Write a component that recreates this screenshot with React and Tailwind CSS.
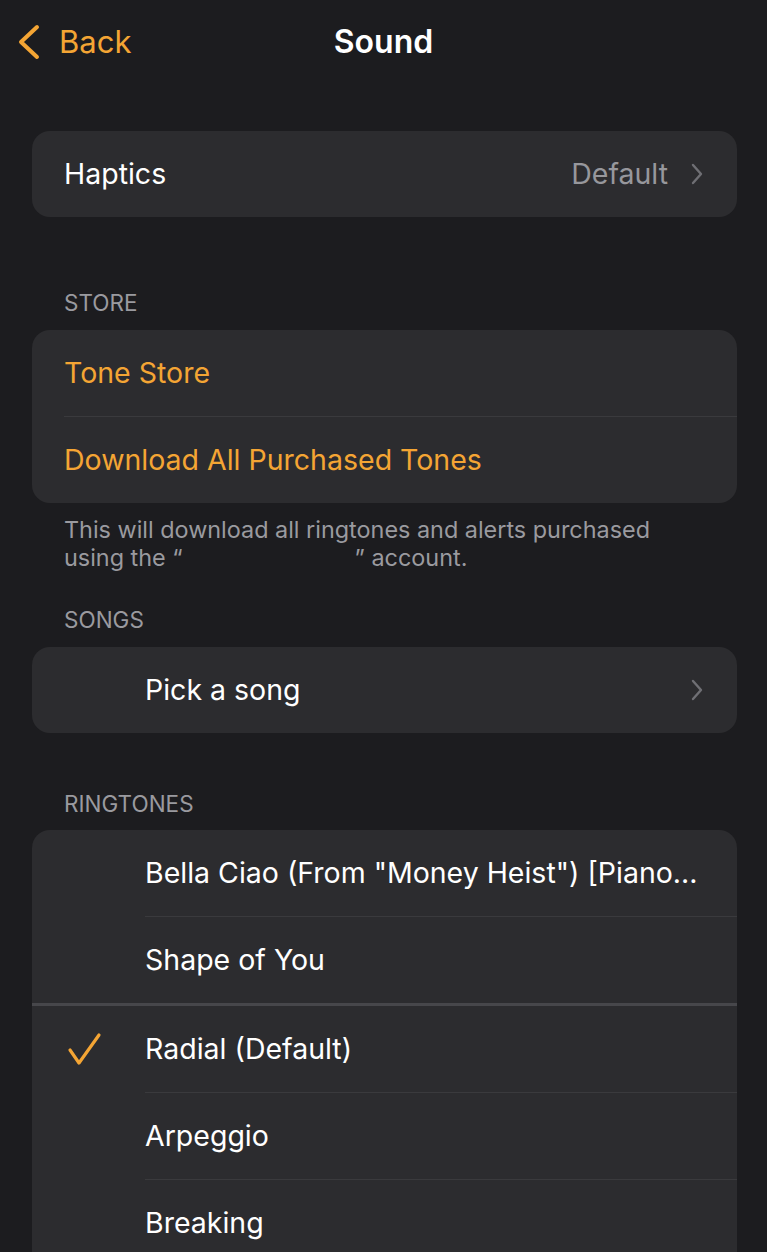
import React from "react";

const font = { fontFamily: 'Inter, "Noto Sans", "Liberation Sans", sans-serif' };

function Chevron() {
  return (
    <svg width="14" height="24" viewBox="0 0 14 24" fill="none" className="shrink-0">
      <path d="M3 3l8 9-8 9" stroke="#6f6f74" strokeWidth="2.4" strokeLinecap="round" strokeLinejoin="round" />
    </svg>
  );
}

function Row({ children, indent = false, right, check, sep, sepFull }) {
  return (
    <div className="relative">
      <div className={`flex items-center h-[86px] pr-[33px] ${indent ? "pl-[113px]" : "pl-[32px]"}`}>
        {check && (
          <svg className="absolute left-[35px] top-[26px]" width="36" height="34" viewBox="0 0 36 34" fill="none">
            <path d="M3 18l9 13L32 3" stroke="#f4a534" strokeWidth="3.2" strokeLinecap="round" strokeLinejoin="round" />
          </svg>
        )}
        <div className="flex-1 min-w-0 whitespace-nowrap overflow-hidden">{children}</div>
        {right}
      </div>
      {sep && <div className={`h-px bg-[#3a3a3d] ${indent ? "ml-[113px]" : "ml-[32px]"}`} />}
      {sepFull && <div className="h-[3px] bg-[#47474b]" />}
    </div>
  );
}

function Label({ children, className = "" }) {
  return (
    <div className={`pl-[64px] text-[22.5px] leading-[28px] text-[#9a9a9f] ${className}`}>{children}</div>
  );
}

export default function App() {
  return (
    <div style={font} className="w-[767px] h-[1252px] overflow-hidden bg-[#1c1c1f] text-white text-[28.5px]">
      <div className="relative flex items-center h-[84px]">
        <div className="flex items-center pl-[16px] gap-[19px] text-[#f4a534] text-[31px]">
          <svg width="26" height="36" viewBox="0 0 26 36" fill="none">
            <path d="M21 3L5 18l16 15" stroke="#f4a534" strokeWidth="4" strokeLinecap="round" strokeLinejoin="round" />
          </svg>
          <span className="-ml-[2px]">Back</span>
        </div>
        <div className="absolute left-0 right-0 text-center font-semibold text-[32px] pointer-events-none">Sound</div>
      </div>

      <div className="pl-[32px] pr-[30px] mt-[47px]">
        <div className="rounded-[18px] bg-[#2c2c2f]">
          <Row
            right={
              <div className="flex items-center gap-[22px] text-[#97979c]">
                <span>Default</span>
                <Chevron />
              </div>
            }
          >
            Haptics
          </Row>
        </div>
      </div>

      <Label className="mt-[72px]">STORE</Label>
      <div className="pl-[32px] pr-[30px] mt-[13px]">
        <div className="rounded-[18px] bg-[#2c2c2f] text-[#f4a534]">
          <Row sep>Tone Store</Row>
          <Row>Download All Purchased Tones</Row>
        </div>
      </div>
      <div className="pl-[64px] pr-[20px] mt-[13px] text-[23.4px] leading-[28px] text-[#9a9a9f] whitespace-nowrap">
        This will download all ringtones and alerts purchased
        <br />
        using the &#8220;<span className="inline-block w-[172px]" />&#8221; account.
      </div>

      <Label className="mt-[34px]">SONGS</Label>
      <div className="pl-[32px] pr-[30px] mt-[13px]">
        <div className="rounded-[18px] bg-[#2c2c2f]">
          <Row indent right={<Chevron />}>
            Pick a song
          </Row>
        </div>
      </div>

      <Label className="mt-[57px]">RINGTONES</Label>
      <div className="pl-[32px] pr-[30px] mt-[12px]">
        <div className="rounded-t-[18px] bg-[#2c2c2f]">
          <Row indent sep>Bella Ciao (From "Money Heist") [Piano...</Row>
          <Row indent sepFull>Shape of You</Row>
          <Row indent sep check>Radial (Default)</Row>
          <Row indent sep>Arpeggio</Row>
          <Row indent>Breaking</Row>
        </div>
      </div>
    </div>
  );
}
